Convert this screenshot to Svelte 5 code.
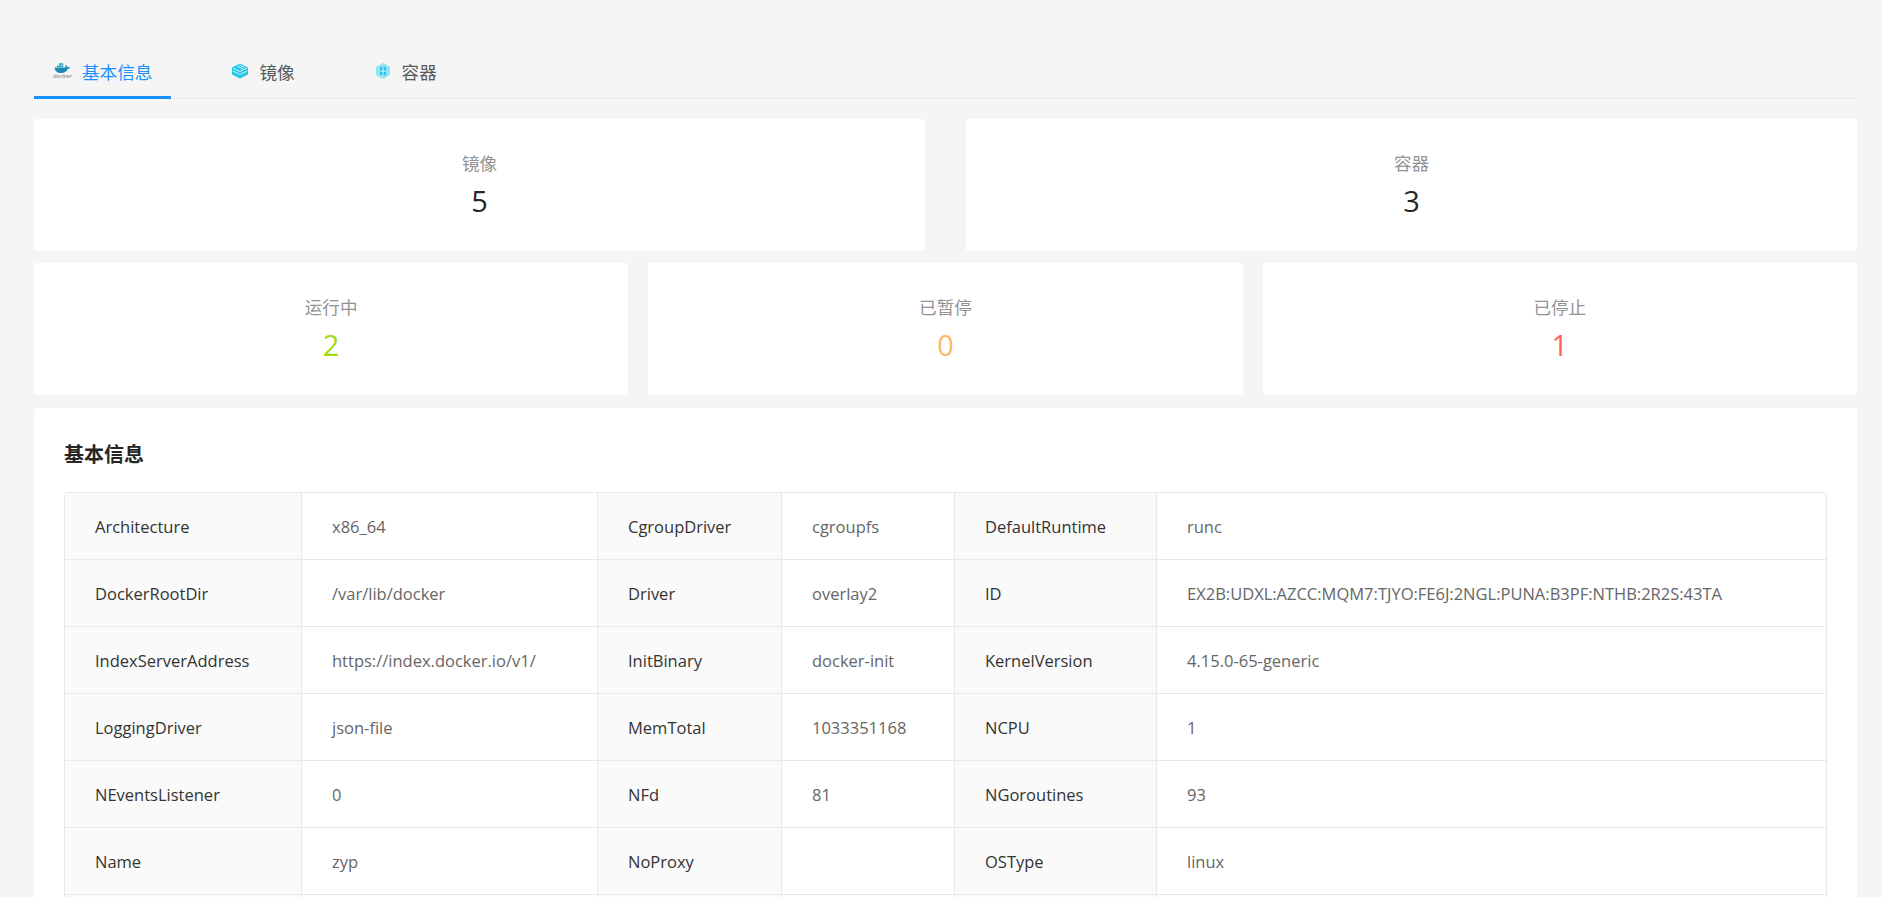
<script>
  const rows = [
    ['Architecture','x86_64','CgroupDriver','cgroupfs','DefaultRuntime','runc'],
    ['DockerRootDir','/var/lib/docker','Driver','overlay2','ID','EX2B:UDXL:AZCC:MQM7:TJYO:FE6J:2NGL:PUNA:B3PF:NTHB:2R2S:43TA'],
    ['IndexServerAddress','https://index.docker.io/v1/','InitBinary','docker-init','KernelVersion','4.15.0-65-generic'],
    ['LoggingDriver','json-file','MemTotal','1033351168','NCPU','1'],
    ['NEventsListener','0','NFd','81','NGoroutines','93'],
    ['Name','zyp','NoProxy','','OSType','linux'],
    ['','','','','','']
  ];
</script>

<div class="page">
  <div class="tabs">
    <div class="tab active">
      <span class="ico">
        <svg width="17" height="10" viewBox="0 0 17 10"><path fill="#1a8bb5" d="M0.500 4.500h11V2.200l1.300.2.500 1.800c1-.5 2-.4 2.900.2-.5 1-1.400 1.200-2.300 1.300C12.800 8.500 10.500 10 7 10 3 10 1 8 .500 4.500z"/><path fill="#1a8bb5" d="M3 2.400h1.800v1.700H3zM5.200 2.400H7v1.700H5.200zM7.400 2.400h1.800v1.700H7.400zM5.200.2H7v1.800H5.200zM7.400.2h1.800v1.800H7.400z"/></svg>
        <span class="dk">docker</span>
      </span>
      <span>基本信息</span>
    </div>
    <div class="tab">
      <span class="ico">
        <svg width="16" height="16" viewBox="0 0 16 16"><path fill="#22c5e6" d="M8 0.500 16 4.500v7l-8 4-8-4v-7z"/><path fill="none" stroke="#d8f6fb" stroke-width="1" d="M1 5l7 3.500L15 5M1 8l7 3.500L15 8M5 3l6 3M7.500 2l5 2.500"/></svg>
      </span>
      <span>镜像</span>
    </div>
    <div class="tab">
      <span class="ico small">
        <svg width="14" height="16" viewBox="0 0 14 16"><path fill="#8fe5f4" d="M7 0l7 4v8l-7 4-7-4V4z"/><path fill="#1fc3e3" d="M4 4.500 7 3l3 1.500v7L7 13l-3-1.500z"/><path stroke="#d8f6fb" fill="none" d="M7 3v10M4 8h6"/></svg>
      </span>
      <span>容器</span>
    </div>
  </div>

  <div class="stats two">
    <div class="stat"><div class="lab">镜像</div><div class="num">5</div></div>
    <div class="stat"><div class="lab">容器</div><div class="num">3</div></div>
  </div>
  <div class="stats three">
    <div class="stat"><div class="lab">运行中</div><div class="num green">2</div></div>
    <div class="stat"><div class="lab">已暂停</div><div class="num orange">0</div></div>
    <div class="stat"><div class="lab">已停止</div><div class="num red">1</div></div>
  </div>

  <div class="info">
    <h2>基本信息</h2>
    <table>
      <colgroup>
        <col class="w1" /><col class="w2" /><col class="w3" /><col class="w4" /><col class="w5" />
      </colgroup>
      <tbody>
        {#each rows as r}
          <tr>
            <th>{r[0]}</th><td>{r[1]}</td>
            <th>{r[2]}</th><td>{r[3]}</td>
            <th>{r[4]}</th><td>{r[5]}</td>
          </tr>
        {/each}
      </tbody>
    </table>
  </div>
</div>

<style>
  :global(html), :global(body) { margin: 0; background: #f5f5f5; }
  .page {
    height: 100vh; overflow: hidden; box-sizing: border-box;
    padding: 48px 25px 0 34px;
    font-family: "Open Sans", "Noto Sans CJK SC", sans-serif;
    color: #5f5f5f;
  }
  .tabs { display: flex; border-bottom: 1px solid #e8e8e8; height: 50px; }
  .tab {
    display: flex; align-items: center; gap: 11px; padding: 0 20px 2px; margin-right: 40px;
    font-size: 17.6px; height: 46px; color: #595959;
  }
  .tab.active { color: #1890ff; border-bottom: 3px solid #1890ff; padding-right: 19px; }
  .ico { display: flex; flex-direction: column; align-items: center; width: 17px; line-height: 1; }
  .ico.small { width: 16px; }
  .ico svg { display: block; }
  .dk { font-size: 6px; color: #777; line-height: 6px; }
  .stats { display: grid; margin-top: 20px; }
  .stats.two { grid-template-columns: 1fr 1fr; gap: 41px; }
  .stats.three { grid-template-columns: 1fr 1fr 1fr; gap: 20px; margin-top: 12px; }
  .stat { background: #fff; height: 132px; border-radius: 3px; display: flex; flex-direction: column; align-items: center; padding-top: 32px; box-sizing: border-box; }
  .lab { font-size: 17.6px; color: #939393; line-height: 24px; }
  .num { font-size: 29px; color: #262626; line-height: 38px; margin-top: 7px; }
  .green { color: #a0d911; }
  .orange { color: #ffb868; }
  .red { color: #ff6060; }
  .info { background: #fff; border-radius: 3px; margin-top: 13px; padding: 35px 30px 0; min-height: 600px; }
  h2 { margin: 0 0 25px; font-size: 20px; font-weight: 700; color: #262626; line-height: 24px; }
  table { width: 100%; table-layout: fixed; border-collapse: separate; border-spacing: 0; border: 1px solid #e8e8e8; border-radius: 4px; font-size: 16.5px; }
  .w1 { width: 237px; }
  .w2 { width: 296px; }
  .w3 { width: 184px; }
  .w4 { width: 173px; }
  .w5 { width: 202px; }
  th, td { height: 67px; padding: 0 30px; text-align: left; font-weight: 400; border-bottom: 1px solid #e8e8e8; border-right: 1px solid #e8e8e8; white-space: nowrap; box-sizing: border-box; }
  th { background: #fafafa; color: #333; }
  td { color: #666; }
  td:last-child { border-right: 0; }
</style>
